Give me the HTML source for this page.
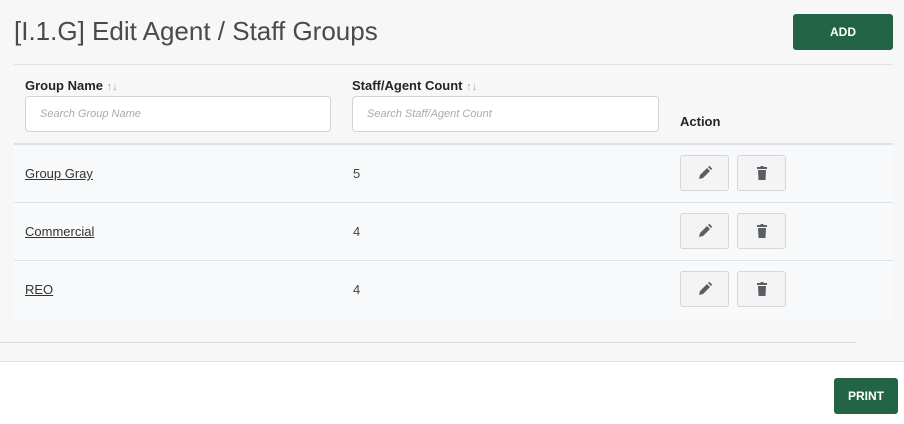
<!DOCTYPE html>
<html><head><meta charset="utf-8"><style>
*{box-sizing:border-box;margin:0;padding:0}
body{width:904px;height:424px;background:#fff;font-family:"Liberation Sans",sans-serif;color:#212529;position:relative;overflow:hidden}
.top{position:absolute;left:0;top:0;width:904px;height:362px;background:#f7f7f7;border-bottom:1px solid #e2e2e2}
h1{position:absolute;left:14px;top:16px;font-size:26px;font-weight:normal;color:#4a4a4a;letter-spacing:0px}
.btn{position:absolute;background:#236446;color:#fff;font-weight:bold;font-size:12px;border-radius:3px;display:flex;align-items:center;justify-content:center}
.hl{position:absolute;left:14px;width:879px;height:1px;background:#e0e3e7}
.th{position:absolute;font-size:13px;font-weight:bold;color:#212529}
.th span{color:#aaa;font-weight:normal;font-size:11px}
.inp{position:absolute;top:96px;height:36px;background:#fff;border:1px solid #ced4da;border-radius:4px;font-size:11px;font-style:italic;color:#aaa;padding:11px 14px}
.body{position:absolute;left:14px;top:146px;width:879px;height:174px;background:#f8f9fa}
.row{position:absolute;left:14px;width:879px;height:58px}
.row .n{position:absolute;left:11px;top:20px;font-size:13px;color:#333;text-decoration:underline}
.row .c{position:absolute;left:339px;top:20px;font-size:13px;color:#444}
.ib{position:absolute;top:9px;width:49px;height:36px;border:1px solid #d6d6d6;border-radius:3px;background:#f4f4f4;display:flex;align-items:center;justify-content:center}
.sep{position:absolute;left:14px;width:879px;height:1px;background:#dee2e6}
</style></head><body>
<div class="top"></div>
<h1>[I.1.G] Edit Agent / Staff Groups</h1>
<div class="btn" style="left:793px;top:14px;width:100px;height:36px">ADD</div>
<div class="hl" style="top:64px"></div>
<div class="th" style="left:25px;top:78px">Group Name <span>↑↓</span></div>
<div class="th" style="left:352px;top:78px">Staff/Agent Count <span>↑↓</span></div>
<div class="th" style="left:680px;top:114px">Action</div>
<div class="inp" style="left:25px;width:306px">Search Group Name</div>
<div class="inp" style="left:352px;width:307px">Search Staff/Agent Count</div>
<div class="hl" style="top:143px;height:2px;background:#dde0e4"></div>
<div class="body"></div>
<div class="row" style="top:146px"><div class="n">Group Gray</div><div class="c">5</div>
<div class="ib" style="left:666px"><svg width="16" height="16" viewBox="0 0 16 16"><path d="M2 14l1-4 7-7 3 3-7 7z M11 2l1.3-1.3 3 3L14 5z" fill="#5a5f66"/></svg></div>
<div class="ib" style="left:723px"><svg width="14" height="16" viewBox="0 0 14 16"><path d="M2 2h3l1-1h2l1 1h3v2H2z M3 5h8l-.5 10h-7z" fill="#5a5f66"/></svg></div></div>
<div class="sep" style="top:202px"></div>
<div class="row" style="top:204px"><div class="n">Commercial</div><div class="c">4</div>
<div class="ib" style="left:666px"><svg width="16" height="16" viewBox="0 0 16 16"><path d="M2 14l1-4 7-7 3 3-7 7z M11 2l1.3-1.3 3 3L14 5z" fill="#5a5f66"/></svg></div>
<div class="ib" style="left:723px"><svg width="14" height="16" viewBox="0 0 14 16"><path d="M2 2h3l1-1h2l1 1h3v2H2z M3 5h8l-.5 10h-7z" fill="#5a5f66"/></svg></div></div>
<div class="sep" style="top:260px"></div>
<div class="row" style="top:262px"><div class="n">REO</div><div class="c">4</div>
<div class="ib" style="left:666px"><svg width="16" height="16" viewBox="0 0 16 16"><path d="M2 14l1-4 7-7 3 3-7 7z M11 2l1.3-1.3 3 3L14 5z" fill="#5a5f66"/></svg></div>
<div class="ib" style="left:723px"><svg width="14" height="16" viewBox="0 0 14 16"><path d="M2 2h3l1-1h2l1 1h3v2H2z M3 5h8l-.5 10h-7z" fill="#5a5f66"/></svg></div></div>
<div style="position:absolute;left:0;top:342px;width:857px;height:1px;background:#dedede"></div>
<div class="btn" style="left:834px;top:378px;width:64px;height:36px">PRINT</div>
</body></html>
